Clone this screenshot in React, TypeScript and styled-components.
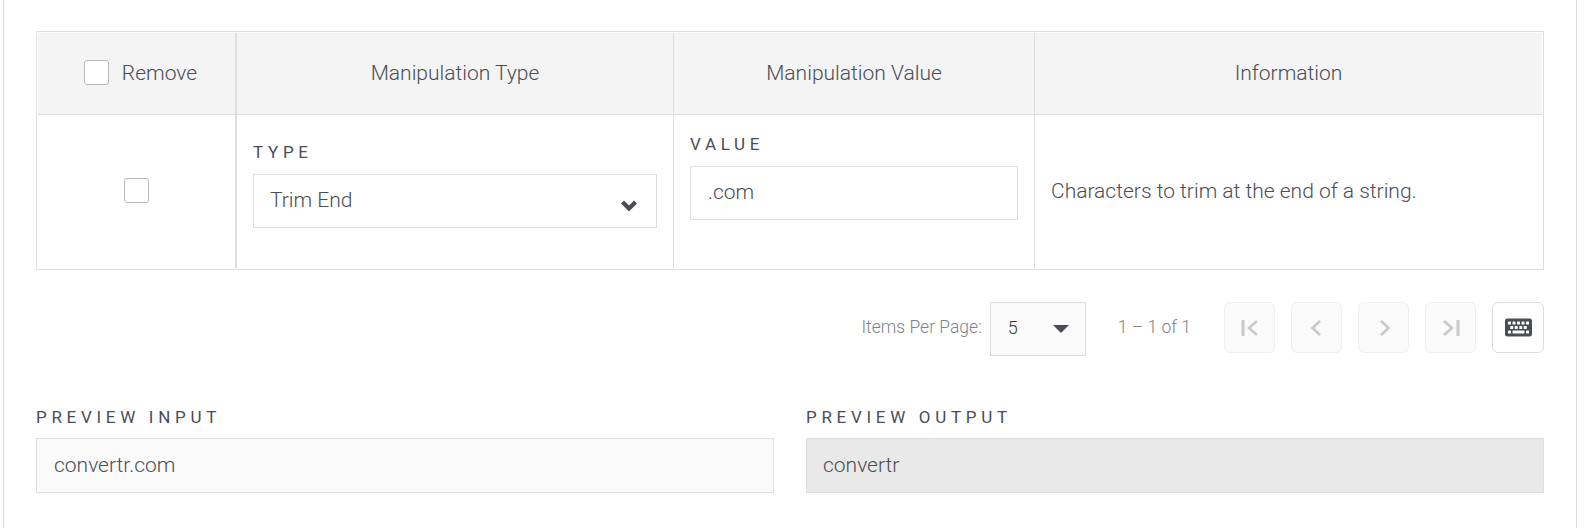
import React from "react";
import styled, { createGlobalStyle } from "styled-components";
import { FaKeyboard } from "react-icons/fa";

const Global = createGlobalStyle`
  html, body { margin: 0; padding: 0; background: #fff; }
  body { font-family: Roboto, "Liberation Sans", sans-serif; font-weight: 300; color: #4a4d55; }
  * { box-sizing: border-box; }
`;

const Panel = styled.main`
  width: 1574px;
  height: 528px;
  margin-left: 3px;
  padding: 31px 32px 0;
  border-left: 1px solid #dcdcdc;
  border-right: 1px solid #dcdcdc;
`;

const Table = styled.div`
  display: grid;
  grid-template-columns: 200px 437px 361px 1fr;
  grid-template-rows: 83px 154px;
  height: 239px;
  border: 1px solid #dfdfdf;
`;

const HeadCell = styled.div<{ $thick?: boolean }>`
  display: flex;
  align-items: center;
  justify-content: center;
  gap: 13px;
  margin: 1px 0 0 0;
  padding-bottom: 2px;
  background: #f4f4f4;
  border-bottom: 1px solid #dfdfdf;
  border-right: ${(p) => (p.$thick ? "2px" : "1px")} solid #dfdfdf;
  font-size: 21px;
  line-height: 24px;
  &:nth-child(4) { border-right: 0; margin-right: 1px; }
  &:first-child { margin-left: 1px; padding-left: 8px; }
`;

const BodyCell = styled.div<{ $thick?: boolean; $top?: number }>`
  padding: ${(p) => p.$top ?? 0}px 16px 0;
  border-right: ${(p) => (p.$thick ? "2px" : "1px")} solid #dfdfdf;
  margin-bottom: 1px;
  &:last-child { border-right: 0; }
`;

const CheckCell = styled(BodyCell)`
  display: flex;
  align-items: center;
  justify-content: center;
  padding-bottom: 2px;
`;

const InfoCell = styled(BodyCell)`
  display: flex;
  align-items: center;
  padding-bottom: 1px;
  font-size: 21px;
`;

const Check = styled.span`
  display: block;
  width: 25px;
  height: 25px;
  flex: none;
  background: #fff;
  border: 1px solid #b9b9bc;
  border-radius: 3px;
`;

const Label = styled.div`
  font-size: 17px;
  line-height: 18px;
  font-weight: 400;
  letter-spacing: 4.7px;
  color: #4a4d55;
  margin-bottom: 13px;
`;

const Field = styled.div<{ $bg?: string; $inset?: number }>`
  display: flex;
  align-items: center;
  justify-content: space-between;
  height: 54px;
  padding: 0 16px 2px ${(p) => p.$inset ?? 16}px;
  background: ${(p) => p.$bg ?? "#fff"};
  border: 1px solid #dfdfdf;
  font-size: 21px;
`;

const ChevronSvg = styled.svg`
  width: 16px;
  height: 12px;
  margin: 11px 3px 0 0;
`;

const SelectChevron = () => (
  <ChevronSvg viewBox="0 0 16 12" aria-hidden="true">
    <path d="M0 3.6 3 .6l5 5 5-5 3 3-8 8z" fill="#4a4d55" />
  </ChevronSvg>
);

const Pager = styled.nav`
  display: flex;
  align-items: flex-start;
  justify-content: flex-end;
  margin-top: 32px;
`;

const PagerLabel = styled.span`
  font-size: 17.5px;
  line-height: 50px;
  color: #80838b;
  margin-right: 8px;
`;

const PageSize = styled.div`
  display: flex;
  align-items: center;
  justify-content: space-between;
  width: 96px;
  height: 54px;
  padding: 0 16px 0 17px;
  background: #fafafa;
  border: 1px solid #dcdcdc;
  font-size: 18px;
  color: #33363d;
`;

const PageSizeValue = styled.span`
  margin-bottom: 3px;
`;

const Caret = styled.span`
  width: 0;
  height: 0;
  border-left: 8px solid transparent;
  border-right: 8px solid transparent;
  border-top: 8px solid #4a4d55;
`;

const Range = styled.span`
  font-size: 17.5px;
  line-height: 50px;
  color: #80838b;
  margin: 0 33px 0 32px;
`;

const NavButton = styled.button`
  display: flex;
  align-items: center;
  justify-content: center;
  width: 51px;
  height: 51px;
  padding: 0;
  margin-right: 16px;
  background: #fafafa;
  border: 1px solid #efefef;
  border-radius: 6px;
`;

const KeyButton = styled(NavButton)`
  width: 52px;
  margin-right: 0;
  background: #fff;
  border-color: #dcdcdc;
  color: #4a4d55;
`;

const NavIcon = ({ d, bar }: { d: string; bar?: number }) => (
  <svg width="20" height="18" viewBox="0 0 20 18" fill="none" stroke="#c8c9cd">
    <path d={d} strokeWidth="2.6" />
    {bar !== undefined && <path d={`M${bar} 1v16`} strokeWidth="3" />}
  </svg>
);

const Previews = styled.section`
  display: grid;
  grid-template-columns: 738px 738px;
  gap: 32px;
  margin-top: 51px;
`;

const PreviewLabel = styled(Label)`
  margin-bottom: 11px;
  line-height: 20px;
`;

const PreviewField = styled(Field)`
  height: 55px;
`;

export default function App() {
  return (
    <>
      <Global />
      <Panel>
        <Table>
          <HeadCell $thick>
            <Check />
            Remove
          </HeadCell>
          <HeadCell>Manipulation Type</HeadCell>
          <HeadCell>Manipulation Value</HeadCell>
          <HeadCell>Information</HeadCell>

          <CheckCell $thick>
            <Check />
          </CheckCell>
          <BodyCell $top={28}>
            <Label>TYPE</Label>
            <Field>
              Trim End
              <SelectChevron />
            </Field>
          </BodyCell>
          <BodyCell $top={20}>
            <Label>VALUE</Label>
            <Field $inset={17}>.com</Field>
          </BodyCell>
          <InfoCell>Characters to trim at the end of a string.</InfoCell>
        </Table>

        <Pager>
          <PagerLabel>Items Per Page:</PagerLabel>
          <PageSize>
            <PageSizeValue>5</PageSizeValue>
            <Caret />
          </PageSize>
          <Range>1 – 1 of 1</Range>
          <NavButton aria-label="First page">
            <NavIcon d="M17 2 9 9l8 7" bar={3} />
          </NavButton>
          <NavButton aria-label="Previous page">
            <NavIcon d="M13 2 5.5 9l7.5 7" />
          </NavButton>
          <NavButton aria-label="Next page">
            <NavIcon d="M7 2l7.5 7-7.5 7" />
          </NavButton>
          <NavButton aria-label="Last page">
            <NavIcon d="M3 2l8 7-8 7" bar={17} />
          </NavButton>
          <KeyButton aria-label="Keyboard shortcuts">
            <FaKeyboard size={27} />
          </KeyButton>
        </Pager>

        <Previews>
          <div>
            <PreviewLabel>PREVIEW INPUT</PreviewLabel>
            <PreviewField $bg="#fafafa" $inset={17}>convertr.com</PreviewField>
          </div>
          <div>
            <PreviewLabel>PREVIEW OUTPUT</PreviewLabel>
            <PreviewField $bg="#e9e9e9">convertr</PreviewField>
          </div>
        </Previews>
      </Panel>
    </>
  );
}
